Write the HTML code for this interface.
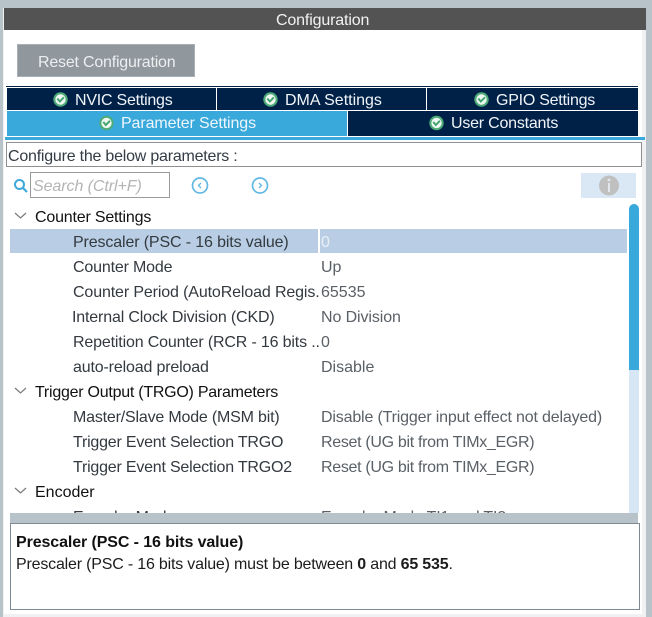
<!DOCTYPE html>
<html><head><meta charset="utf-8"><style>
html,body{margin:0;padding:0}
body{width:652px;height:617px;position:relative;overflow:hidden;background:#fff;font:16px/20px "Liberation Sans",Arial,sans-serif;color:#222}
.a{position:absolute}
.t{position:absolute;white-space:nowrap;line-height:20px;height:20px}
.tab{position:absolute;background:#002147}
.g{color:#111}.l{color:#33393f}.v{color:#5a6066}
svg{position:absolute;overflow:visible}
</style></head><body>
<div class="a" style="left:0;top:0;width:652px;height:8px;background:#b8c2c9"></div>
<div class="a" style="left:0;top:0;width:3px;height:617px;background:#b8c2c9"></div>
<div class="a" style="left:3px;top:8px;width:1px;height:609px;background:#f0f1f2"></div>
<div class="a" style="left:642px;top:30px;width:4px;height:587px;background:#f0f1f2"></div>
<div class="a" style="left:646px;top:0;width:6px;height:617px;background:#b8c2c9"></div>
<div class="a" style="left:3px;top:614px;width:643px;height:3px;background:#f0f1f2"></div>
<div class="a" style="left:4px;top:8px;width:642px;height:22px;background:#525352"></div>
<div class="t" style="left:276px;top:11px;color:#f2f2f2;letter-spacing:-.15px">Configuration</div>

<div class="a" style="left:17px;top:44px;width:176px;height:31px;background:#90979d;border:1px solid #a8b0b6"></div>
<div class="t" style="left:38px;top:53px;color:#eceef0;letter-spacing:-.21px">Reset Configuration</div>

<div class="a" style="left:6px;top:86px;width:632px;height:1px;background:#002147"></div>
<div class="tab" style="left:7px;top:88px;width:209px;height:22px"></div>
<div class="tab" style="left:217px;top:88px;width:209px;height:22px"></div>
<div class="tab" style="left:427px;top:88px;width:211px;height:22px"></div>
<div class="a" style="left:7px;top:111px;width:340px;height:25px;background:#39a9dc"></div>
<div class="tab" style="left:348px;top:111px;width:290px;height:25px"></div>
<div class="a" style="left:5px;top:136.5px;width:640px;height:3px;background:#39a9dc"></div>

<svg style="left:0;top:0" width="652" height="140">
<defs><g id="c"><circle r="7.2" fill="#4dab78"/><circle r="5.200" fill="#eef7f1"/><path d="M-3.200-1 L-.7 2 L3.400-2.200" fill="none" stroke="#3fa36c" stroke-width="1.900"/></g></defs>
<use href="#c" x="60.500" y="99.500"/><use href="#c" x="270.500" y="99.500"/><use href="#c" x="481.500" y="99.500"/>
<use href="#c" x="106.500" y="123"/><use href="#c" x="436.500" y="123"/>
</svg>
<div class="t" style="left:75px;top:91px;color:#f0f4f8;letter-spacing:-.23px">NVIC Settings</div>
<div class="t" style="left:285px;top:91px;color:#f0f4f8">DMA Settings</div>
<div class="t" style="left:496px;top:91px;color:#f0f4f8;letter-spacing:-.25px">GPIO Settings</div>
<div class="t" style="left:121px;top:114px;color:#eef6fb;letter-spacing:-.11px">Parameter Settings</div>
<div class="t" style="left:451px;top:114px;color:#f0f4f8;letter-spacing:-.22px">User Constants</div>

<div class="a" style="left:6px;top:142px;width:634px;height:23px;border:1px solid #8f8f8f"></div>
<div class="t" style="left:8px;top:147px;color:#333b44;letter-spacing:-.22px">Configure the below parameters :</div>

<svg style="left:0;top:170px" width="30" height="30"><circle cx="19.500" cy="14.500" r="4.500" fill="none" stroke="#3ea9dd" stroke-width="2"/><path d="M23 18L27 22" stroke="#3ea9dd" stroke-width="2.200"/></svg>
<div class="a" style="left:30px;top:172px;width:138px;height:24px;border:1px solid #9a9a9a"></div>
<div class="t" style="left:33px;top:177px;font-style:italic;color:#b4b4b4;letter-spacing:-.07px">Search (Ctrl+F)</div>
<svg style="left:190px;top:175px" width="80" height="20">
<circle cx="10" cy="10.500" r="7.500" fill="none" stroke="#62b8e4" stroke-width="1.700"/><path d="M11 8L8.500 10.500L11 13" fill="none" stroke="#62b8e4" stroke-width="1.300"/>
<circle cx="70" cy="10.500" r="7.500" fill="none" stroke="#62b8e4" stroke-width="1.700"/><path d="M69 8L71.500 10.500L69 13" fill="none" stroke="#62b8e4" stroke-width="1.300"/>
</svg>
<div class="a" style="left:581px;top:173px;width:55px;height:25px;background:#dae8f5"></div>
<svg style="left:581px;top:173px" width="55" height="25"><circle cx="28" cy="12.500" r="10" fill="#c0c0c0"/><circle cx="28" cy="7" r="1.400" fill="#e4e8ec"/><rect x="27" y="10" width="2" height="9" fill="#e4e8ec"/></svg>

<div class="a" style="left:629px;top:204px;width:10px;height:309px;background:#d6e6f4;border-radius:5px 5px 0 0"></div>
<div class="a" style="left:629px;top:204px;width:10px;height:166px;background:#39a9dc;border-radius:5px 5px 0 0"></div>

<div class="a" style="left:10px;top:229px;width:308px;height:24px;background:#b9cee4"></div>
<div class="a" style="left:320px;top:229px;width:307px;height:24px;background:#b9cee4"></div>

<svg style="left:0;top:200px" width="30" height="300" fill="none" stroke="#7a7a7a" stroke-width="1.200">
<path d="M15 13L20.500 18L26 13"/><path d="M15 188L20.500 193L26 188"/><path d="M15 288L20.500 293L26 288"/>
</svg>

<div class="a" style="left:0;top:204px;width:628px;height:309px;overflow:hidden">
<div class="t g" style="left:35px;top:4px;letter-spacing:-.19px">Counter Settings</div>
<div class="t l" style="left:73px;top:29px;letter-spacing:-.13px">Prescaler (PSC - 16 bits value)</div><div class="t" style="left:321px;top:29px;color:#e8eef5">0</div>
<div class="t l" style="left:73px;top:54px;letter-spacing:-.17px">Counter Mode</div><div class="t v" style="left:321px;top:54px">Up</div>
<div class="t l" style="left:73px;top:79px;letter-spacing:-.13px">Counter Period (AutoReload Regis.</div><div class="t v" style="left:321px;top:79px">65535</div>
<div class="t l" style="left:72px;top:104px;letter-spacing:-.16px">Internal Clock Division (CKD)</div><div class="t v" style="left:321px;top:104px;letter-spacing:-.1px">No Division</div>
<div class="t l" style="left:73px;top:129px;letter-spacing:-.16px">Repetition Counter (RCR - 16 bits ..</div><div class="t v" style="left:321px;top:129px">0</div>
<div class="t l" style="left:73px;top:154px;letter-spacing:-.16px">auto-reload preload</div><div class="t v" style="left:321px;top:154px">Disable</div>
<div class="t g" style="left:35px;top:179px;letter-spacing:-.25px">Trigger Output (TRGO) Parameters</div>
<div class="t l" style="left:73px;top:204px;letter-spacing:-.19px">Master/Slave Mode (MSM bit)</div><div class="t v" style="left:321px;top:204px;letter-spacing:-.17px">Disable (Trigger input effect not delayed)</div>
<div class="t l" style="left:73px;top:229px;letter-spacing:-.21px">Trigger Event Selection TRGO</div><div class="t v" style="left:321px;top:229px;letter-spacing:-.31px">Reset (UG bit from TIMx_EGR)</div>
<div class="t l" style="left:73px;top:254px;letter-spacing:-.21px">Trigger Event Selection TRGO2</div><div class="t v" style="left:321px;top:254px;letter-spacing:-.31px">Reset (UG bit from TIMx_EGR)</div>
<div class="t g" style="left:35px;top:279px">Encoder</div>
<div class="t l" style="left:73px;top:304px;letter-spacing:-.17px">Encoder Mode</div><div class="t v" style="left:321px;top:304px;letter-spacing:-.2px">Encoder Mode TI1 and TI2</div>
</div>

<div class="a" style="left:10px;top:513px;width:628px;height:10px;background:#b8c2c9"></div>
<div class="a" style="left:10px;top:523px;width:628px;height:85px;background:#fff;border:1px solid #7d8a94"></div>
<div class="t" style="left:16px;top:533px;font-weight:bold;color:#111;letter-spacing:-.1px">Prescaler (PSC - 16 bits value)</div>
<div class="t" style="left:16px;top:555px;color:#1c1c1c;letter-spacing:-.19px">Prescaler (PSC - 16 bits value) must be between <b>0</b> and <b>65 535</b>.</div>
</body></html>
